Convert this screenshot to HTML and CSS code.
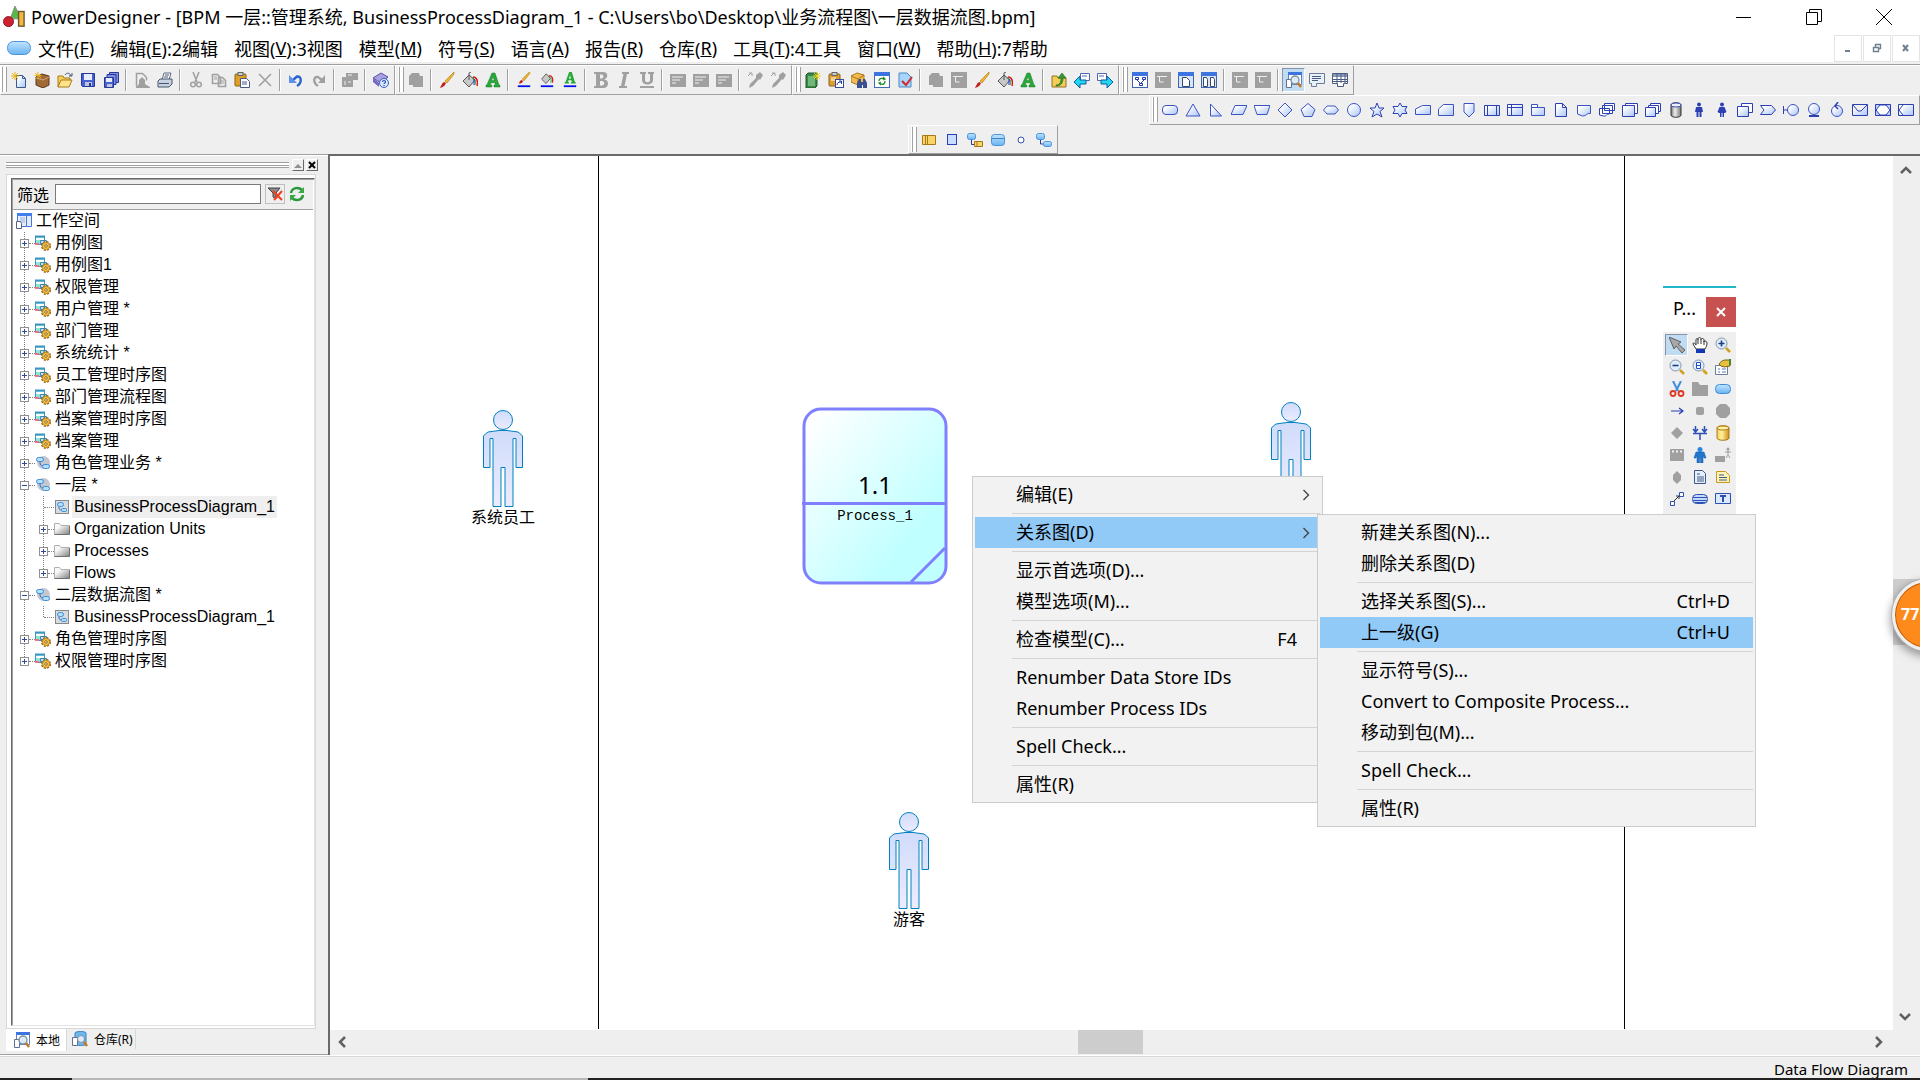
FILE: index.html
```
<!DOCTYPE html>
<html lang="zh-CN">
  <head>
    <meta charset="UTF-8" />
    <meta name="viewport" content="width=device-width, initial-scale=1.0" />
    <title>PowerDesigner</title>
    <link rel="stylesheet" href="styles.css" />
  </head>

  <body>
    <!-- icon sprite -->
    <svg class="sprite" width="0" height="0">
      <defs>
        <linearGradient id="gb" x1="0" y1="0" x2="1" y2="1"><stop offset="0.2" stop-color="#fff" /><stop offset="1" stop-color="#a9c4fa" /></linearGradient>
        <linearGradient id="gp" x1="0" y1="0" x2="0" y2="1"><stop offset="0" stop-color="#c4e4ff" /><stop offset="1" stop-color="#68b4f0" /></linearGradient>
        <linearGradient id="gy" x1="0" y1="0" x2="1" y2="0"><stop offset="0" stop-color="#f8d050" /><stop offset="0.4" stop-color="#fff0a0" /><stop offset="1" stop-color="#d09010" /></linearGradient>
        <linearGradient id="gg" x1="0" y1="0" x2="1" y2="1"><stop offset="0.3" stop-color="#f8f8f8" /><stop offset="1" stop-color="#808080" /></linearGradient>
        <linearGradient id="gc" x1="0" y1="0" x2="1" y2="0"><stop offset="0" stop-color="#777" /><stop offset="0.4" stop-color="#eee" /><stop offset="1" stop-color="#777" /></linearGradient>
        <linearGradient id="ga" x1="0" y1="0" x2="0" y2="1"><stop offset="0" stop-color="#d0dcfa" /><stop offset="1" stop-color="#ececff" /></linearGradient>
        <linearGradient id="gproc" x1="0" y1="0" x2="1" y2="1"><stop offset="0.05" stop-color="#fff" /><stop offset="0.75" stop-color="#c0ffff" /></linearGradient>

        <symbol id="app" viewBox="0 0 24 24"><path d="M13 0l7 14H8z" fill="#58b848" stroke="#888" /><rect x="17" y="6" width="6" height="16" fill="#f4b840" stroke="#6b5630" stroke-width="1.5" /><circle cx="6" cy="17" r="5.5" fill="#d02030" stroke="#801828" /></symbol>
        <symbol id="pill" viewBox="0 0 24 14"><rect x="0.5" y="0.5" width="23" height="13" rx="6" fill="url(#gp)" stroke="#4a94dc" /></symbol>
        <symbol id="new" viewBox="0 0 16 16"><path d="M5.5 3.5h6l3 3v9h-9z" fill="url(#gb)" stroke="#3a5a88" /><path d="M11.5 3.5v3h3" fill="none" stroke="#3a5a88" /><path d="M4 0v8M0 4h8M1 1l6 6M7 1L1 7" stroke="#e8b818" /></symbol>
        <symbol id="proj" viewBox="0 0 16 16"><path d="M2 5l6-3 7 2v9l-6 3-7-3z" fill="#a06a38" stroke="#603818" /><path d="M2 6l7 2 6-3" fill="none" stroke="#d8a870" /><path d="M4 0v7M0.5 3.5h7M1 1l6 5" stroke="#e8b818" /></symbol>
        <symbol id="open" viewBox="0 0 16 16"><path d="M1 15V4h5l1 2h6v3" fill="#f4d060" stroke="#a87818" /><path d="M1 15l3-7h11l-3 7z" fill="#ffe48a" stroke="#a87818" /><path d="M8 3c2-3 5-2 6 1M12 4h3V1" fill="none" stroke="#405878" /></symbol>
        <symbol id="save" viewBox="0 0 16 16"><path d="M1.5 1.5h13v13h-12l-1-1z" fill="#4860d0" stroke="#28389a" /><path d="M4 2h8v6H4z" fill="#e8ecff" /><path d="M5 10h7v4H5z" fill="#c0c8d8" /><path d="M9 11h2v3H9z" fill="#28389a" /></symbol>
        <symbol id="saveall" viewBox="0 0 16 16"><path d="M6.5 0.5h9v10h-9z" fill="#8090e0" stroke="#28389a" /><path d="M4 2.5h9v10H4z" fill="#8090e0" stroke="#28389a" /><path d="M1.5 5.5h9v10h-9z" fill="#4860d0" stroke="#28389a" /><path d="M3 6h6v4H3z" fill="#e8ecff" /><path d="M4 12h5v3H4z" fill="#c0c8d8" /></symbol>
        <symbol id="preview" viewBox="0 0 16 16"><path d="M2.5 14.5v-13h6l4 4v3" fill="none" stroke="#a0a0a0" stroke-width="1.5" /><path d="M2 15l3-3V8l3-3 3 3v4l5 3v1H2z" fill="#a0a0a0" /></symbol>
        <symbol id="print" viewBox="0 0 16 16"><path d="M5 8l2-7h7l-2 7z" fill="#fff" stroke="#5a6880" /><path d="M1 9l2-2h12v5l-3 3H1z" fill="#c8d2e0" stroke="#46546c" /><path d="M2 11.5h10M8 3h4M7 5h4" stroke="#46546c" /></symbol>
        <symbol id="cut" viewBox="0 0 16 16"><path d="M5 0l4 10M11 0L7 10" fill="none" stroke="#a0a0a0" stroke-width="1.5" /><circle cx="5" cy="12.5" r="2.3" fill="none" stroke="#a0a0a0" stroke-width="1.5" /><circle cx="11" cy="12.5" r="2.3" fill="none" stroke="#a0a0a0" stroke-width="1.5" /></symbol>
        <symbol id="copy" viewBox="0 0 16 16"><path d="M1.5 2.5h5l3 3v6h-8zM7.5 5.5h4l3 3v6h-7z" fill="#eee" stroke="#a0a0a0" stroke-width="1.6" /><path d="M9 9h4M9 11h4M3 5h3M3 7h3" stroke="#a0a0a0" /></symbol>
        <symbol id="paste" viewBox="0 0 16 16"><rect x="1" y="2" width="11" height="12" rx="1" fill="#e0a028" stroke="#88601c" /><rect x="4" y="0.5" width="5" height="3" fill="#c8ccd4" stroke="#666" /><path d="M6.5 6.5h6l3 3v6h-9z" fill="#fff" stroke="#4a5a88" /><path d="M8 10h5M8 12h5" stroke="#4a5a88" /></symbol>
        <symbol id="del" viewBox="0 0 16 16"><path d="M2 2l12 12M14 2L2 14" stroke="#a0a0a0" stroke-width="1.6" /></symbol>
        <symbol id="undo" viewBox="0 0 16 16"><path d="M9 14c5-3 5-10 0-9.500L5 8" fill="none" stroke="#2c62d0" stroke-width="2.4" /><path d="M1 3v8h8z" fill="#5c90ec" /></symbol>
        <symbol id="redo" viewBox="0 0 16 16"><path d="M7 14C2 11 2 4 7 5l4 3" fill="none" stroke="#a0a0a0" stroke-width="2.4" /><path d="M14 3v8H7z" fill="#a0a0a0" /></symbol>
        <symbol id="prop" viewBox="0 0 16 16"><path d="M0 5h11v10H0zM4 1h12v7H4z" fill="#a0a0a0" /><path d="M2 10h2M6 10h3M2 12h2M6 3h4" stroke="#eee" /></symbol>
        <symbol id="help" viewBox="0 0 16 16"><path d="M0 6l8-5 7 4-7 6z" fill="#a8a0e0" stroke="#5a50a8" /><path d="M0 6v4l6 5V11z" fill="#7468c0" /><circle cx="11" cy="11" r="4.500" fill="#dce8fc" stroke="#3860c0" /><path d="M9.500 10c0-2 3-2 3 0 0 1-1.500 1-1.500 2M11 13v1" fill="none" stroke="#2850b8" stroke-width="1.2" /></symbol>
        <symbol id="shapes" viewBox="0 0 16 16"><path d="M1 4l3-3h7l1 3h3v11H5v-2H1z" fill="#a0a0a0" /></symbol>
        <symbol id="brush" viewBox="0 0 16 16"><path d="M15 0L6 9l2 2 7-9z" fill="#f0b828" stroke="#a87010" stroke-width="0.6" /><path d="M5 10l2 1c-1 3-3 4-6 5 1-2 2-5 4-6z" fill="#c02020" /></symbol>
        <symbol id="bucket" viewBox="0 0 16 16"><path d="M7 3l6 5-6 7-6-6z" fill="#c8c8c8" stroke="#555" /><path d="M7 8V1l2-1" fill="none" stroke="#555" /><path d="M11 5c4 0 5 4 4 9" fill="none" stroke="#e01818" stroke-width="1.5" /><path d="M10 6c3 0 4 3 3 7" fill="none" stroke="#18a028" /><path d="M12 7v6" stroke="#2030e8" /></symbol>
        <symbol id="font" viewBox="0 0 16 16"><path d="M1 15v-2l1-.3L7 1h3l4 12 1 .3v1.700H9v-2l1.500-.3-.6-2H6l-.7 2 1.500.3v2zM6.600 8.500h2.700L8 4.500z" fill="#28a838" stroke="#187828" stroke-width="0.5" /></symbol>
        <symbol id="brushl" viewBox="0 0 16 18"><path d="M14 0L6 8l2 2 7-9z" fill="#f0b828" stroke="#a87010" stroke-width="0.6" /><path d="M5 9l2 1c-1 2-2 3-5 3 1-1 1-3 3-4z" fill="#c02020" /><path d="M1 16h14" stroke="#0010e8" stroke-width="2" /></symbol>
        <symbol id="bucketl" viewBox="0 0 16 18"><path d="M7 2l5 5-5 6-5-5z" fill="#c8c8c8" stroke="#555" /><path d="M10 4c4 0 5 3 4 8" fill="none" stroke="#e01818" stroke-width="1.5" /><path d="M10 6c3 0 3 3 2 6" fill="none" stroke="#18a028" /><path d="M1 16h14" stroke="#0010e8" stroke-width="2" /></symbol>
        <symbol id="fontl" viewBox="0 0 16 18"><path d="M2 13v-1.500l1-.3L7 0h3l3.500 11.200 1 .3V13H9v-1.500l1-.3-.4-2H6.300l-.7 2 1.400.3V13zM6.800 7.500h2.300L8 3.500z" fill="#28a838" /><path d="M1 16h14" stroke="#0010e8" stroke-width="2" /></symbol>
        <symbol id="bold" viewBox="0 0 16 16"><path fill-rule="evenodd" d="M1 0h9c6 0 5 6.500 1 7.500 6 .5 5 8.500-1 8.500H1v-2h2V2H1zM7 2.500v4h1.500c2.500 0 2.500-4 0-4zM7 9v4.500h2c3 0 3-4.500 0-4.500z" fill="#a0a0a0" /></symbol>
        <symbol id="italic" viewBox="0 0 16 16"><path d="M6 0h7v2h-2L8.500 14H11v2H3v-2h2L7.500 2H6z" fill="#a0a0a0" /></symbol>
        <symbol id="under" viewBox="0 0 16 16"><path d="M1 0h6v2H6v6c0 3 5 3 5 0V2H9V0h6v2h-1v6c0 6-11 6-11 0V2H1zM1 14h14v2H1z" fill="#a0a0a0" /></symbol>
        <symbol id="al" viewBox="0 0 16 16"><path d="M0 2h16v13H0z" fill="#a0a0a0" /><path d="M2 5h11M2 8h8M2 11h4" stroke="#efefef" /></symbol>
        <symbol id="pipe" viewBox="0 0 16 16"><path d="M9 3l4-3 3 3-3 5-1-1-6 7-4 2 1-4 6-6z" fill="#a0a0a0" /><path d="M1 4l3-3M2 1h3v3" fill="none" stroke="#a0a0a0" /></symbol>
        <symbol id="book" viewBox="0 0 16 16"><path d="M1 3l2-2h9v13l-2 2H1z" fill="#388848" stroke="#205828" /><path d="M3 4h7v10H3z" fill="#70b878" /><path d="M12 0v8M8 4h8M9 1l6 6M15 1L9 7" stroke="#f0d020" /></symbol>
        <symbol id="pastel" viewBox="0 0 16 16"><rect x="1" y="2" width="11" height="12" rx="1" fill="#e0a028" stroke="#88601c" /><rect x="4" y="0.5" width="5" height="3" fill="#c8ccd4" stroke="#666" /><path d="M3 6h5M3 8h4" stroke="#fff" /><rect x="7.5" y="7.5" width="8" height="8" fill="#fff" stroke="#3a4a98" /><path d="M9 13c0-2 1-3 4-3M11 9h2.500v3" fill="none" stroke="#2038a0" /></symbol>
        <symbol id="cube" viewBox="0 0 16 16"><path d="M0 4l6-3 7 2v9l-6 1-7-3z" fill="#f4bc50" stroke="#a87818" /><path d="M0 4l7 3 6-4M7 7v6" fill="none" stroke="#a87818" /><path d="M6 11l2-4h2v3h2V7h2l2 4v5h-4v-3h-1v3H6z" fill="#3a5090" /></symbol>
        <symbol id="sync" viewBox="0 0 16 16"><rect x="0.5" y="0.5" width="15" height="15" fill="#fff" stroke="#4068b8" /><path d="M0 0h16v4H0z" fill="#3c74e0" /><path d="M5 9c0-3 3-3 5-2M9 5l2 2-2 1M11 9c0 4-4 4-5 2M7 13l-2-2 2-1" fill="none" stroke="#289030" stroke-width="1.3" /></symbol>
        <symbol id="check" viewBox="0 0 16 16"><path d="M2 1h8l4 4v10H2z" fill="#a8d4fa" stroke="#4888c8" /><path d="M5 9l4 4 6-8" fill="none" stroke="#d02828" stroke-width="2" /></symbol>
        <symbol id="gbox" viewBox="0 0 16 16"><path d="M0 0h16v16H0z" fill="#a0a0a0" /><path d="M2 4.500h10M4.500 4v6h4" fill="none" stroke="#eee" /></symbol>
        <symbol id="up" viewBox="0 0 16 16"><path d="M1 4h5l1 2h8v9H1z" fill="#f4cc58" stroke="#98701c" /><path d="M5 13c4 0 5-3 5-7H7l4-5 4 5h-3c0 5-2 8-7 8z" fill="#389838" stroke="#186818" stroke-width="0.6" /></symbol>
        <symbol id="prev" viewBox="0 0 16 16"><path d="M6.500 1.500h9v7h-9z" fill="#fff" stroke="#5068b0" /><path d="M8 4h5" stroke="#5068b0" /><path d="M0 10l6-6v4h6v4H6v4z" fill="#20d8f0" stroke="#1058a0" /></symbol>
        <symbol id="next" viewBox="0 0 16 16"><path d="M0.5 1.500h9v7h-9z" fill="#fff" stroke="#5068b0" /><path d="M2 4h5" stroke="#5068b0" /><path d="M16 10l-6-6v4H4v4h6v4z" fill="#20d8f0" stroke="#1058a0" /></symbol>
        <symbol id="wtree" viewBox="0 0 16 16"><rect x="0.5" y="0.5" width="15" height="15" fill="#fff" stroke="#3c64b0" /><path d="M0 0h16v4H0z" fill="#3c74e0" /><path d="M3.500 5.500h3v2h-3zM10.500 5.500h3v2h-3zM7.500 11.500h3v2h-3zM5 8l3 3M12 8l-3 3" fill="none" stroke="#2038a0" /></symbol>
        <symbol id="wdoc" viewBox="0 0 16 16"><rect x="0.5" y="0.5" width="15" height="15" fill="#d8e4f4" stroke="#3c64b0" /><path d="M0 0h16v4H0z" fill="#3c74e0" /><path d="M4.500 5.500h4l3 3v6h-7z" fill="#fff" stroke="#384868" /></symbol>
        <symbol id="wdocs" viewBox="0 0 16 16"><rect x="0.5" y="0.5" width="15" height="15" fill="#d8e4f4" stroke="#3c64b0" /><path d="M0 0h16v4H0z" fill="#3c74e0" /><path d="M2.500 5.500h3l1 2v7h-4zM9.500 5.500h3l1 2v7h-4z" fill="#fff" stroke="#384868" /></symbol>
        <symbol id="brow" viewBox="0 0 16 16"><path d="M2.500 0.500h13v12h-13z" fill="#fff" stroke="#6080c0" /><path d="M2 0h14v3H2z" fill="#3c74e0" /><path d="M0.500 7.500h5v8h-5z" fill="#fff" stroke="#607090" /><circle cx="9" cy="8" r="4" fill="#dceafa" stroke="#8090a0" stroke-width="1.4" /><path d="M12 11l3 4" stroke="#c87820" stroke-width="2.5" /></symbol>
        <symbol id="outp" viewBox="0 0 16 16"><path d="M0.500 1.500h15v10h-8v3h-5v-3h-2z" fill="#e8f0fc" stroke="#6a7c98" /><path d="M3 4.500h9M3 6.500h9M3 8.500h6" stroke="#4a5c80" /></symbol>
        <symbol id="resl" viewBox="0 0 16 16"><path d="M0.500 1.500h15v10h-4v3h-6v-3h-5z" fill="#fff" stroke="#4a5c80" /><path d="M1 2h14v3H1z" fill="#8898b8" /><path d="M1 7.500h14M1 9.500h14M5 2v9M9 2v9M13 2v9" stroke="#4a5c80" /></symbol>

        <!-- predefined shapes -->
        <symbol id="s1" viewBox="0 0 16 16"><rect x="0.5" y="3.5" width="15" height="9" rx="3.5" fill="url(#gb)" stroke="#3c54c0" /></symbol>
        <symbol id="s2" viewBox="0 0 16 16"><path d="M8 2l7 12H1z" fill="url(#gb)" stroke="#3c54c0" /></symbol>
        <symbol id="s3" viewBox="0 0 16 16"><path d="M2.500 2v12h11z" fill="url(#gb)" stroke="#3c54c0" /></symbol>
        <symbol id="s4" viewBox="0 0 16 16"><path d="M4 3.500h12l-4 9H0z" fill="url(#gb)" stroke="#3c54c0" /></symbol>
        <symbol id="s5" viewBox="0 0 16 16"><path d="M0 3.500h16l-3 9H3z" fill="url(#gb)" stroke="#3c54c0" /></symbol>
        <symbol id="s6" viewBox="0 0 16 16"><path d="M8 1l7 7-7 7-7-7z" fill="url(#gb)" stroke="#3c54c0" /></symbol>
        <symbol id="s7" viewBox="0 0 16 16"><path d="M8 1.500l7 6-3 7H4l-3-7z" fill="url(#gb)" stroke="#3c54c0" /></symbol>
        <symbol id="s8" viewBox="0 0 16 16"><path d="M4 4h8l3.500 4-3.500 4H4L.5 8z" fill="url(#gb)" stroke="#3c54c0" /></symbol>
        <symbol id="s9" viewBox="0 0 16 16"><circle cx="8" cy="8" r="6.5" fill="url(#gb)" stroke="#3c54c0" /></symbol>
        <symbol id="s10" viewBox="0 0 16 16"><path d="M8 1l2 5h5l-4 3.500 2 5.500-5-3-5 3 2-5.500L1 6h5z" fill="url(#gb)" stroke="#2c40b4" /></symbol>
        <symbol id="s11" viewBox="0 0 16 16"><path d="M8 1l2 3.500h5L13 8l2 3.500h-5L8 15l-2-3.500H1L3 8 1 4.500h5z" fill="url(#gb)" stroke="#2c40b4" /></symbol>
        <symbol id="s12" viewBox="0 0 16 16"><path d="M.5 7l7-3.500h8v9H.5z" fill="url(#gb)" stroke="#3c54c0" /></symbol>
        <symbol id="s13" viewBox="0 0 16 16"><path d="M.5 7l5-4.500h10v11H.5z" fill="url(#gb)" stroke="#3c54c0" /></symbol>
        <symbol id="s14" viewBox="0 0 16 16"><path d="M3 1.500h10V10l-5 5-5-5z" fill="url(#gb)" stroke="#3c54c0" /></symbol>
        <symbol id="s15" viewBox="0 0 16 16"><path d="M.5 3.500h15v10H.5zM3.500 3v10M12.500 3v10" fill="url(#gb)" stroke="#2c40b4" /></symbol>
        <symbol id="s16" viewBox="0 0 16 16"><path d="M.5 2.500h15v11H.5zM4.500 3v10M0 5.500h15" fill="url(#gb)" stroke="#2c40b4" /></symbol>
        <symbol id="s17" viewBox="0 0 16 16"><path d="M1.500 13.500v-11h6v3h7v8zM2 5.500h6" fill="url(#gb)" stroke="#3c54c0" /></symbol>
        <symbol id="s18" viewBox="0 0 16 16"><path d="M2.500 1.500h7l4 4v9h-11zM9.500 1.500v4h4" fill="url(#gb)" stroke="#2c40b4" /></symbol>
        <symbol id="s19" viewBox="0 0 16 16"><path d="M1.500 3.500h13v8c-4-1-4 3-8 2.500l-5-2z" fill="url(#gb)" stroke="#3c54c0" /></symbol>
        <symbol id="s20" viewBox="0 0 16 16"><path d="M5.500 1.500h10v7h-10zM3.500 3.500h10v8h-10zM.5 6.500h10V12c-3-1-3 3-6 2l-4-1z" fill="#fff" stroke="#2c40b4" /></symbol>
        <symbol id="s21" viewBox="0 0 16 16"><path d="M3.500 1.500h12v10h-12z" fill="#fff" stroke="#2c40b4" /><path d="M.5 3.500h12v11H.5z" fill="url(#gb)" stroke="#2c40b4" /></symbol>
        <symbol id="s22" viewBox="0 0 16 16"><path d="M5.500 1.500h10v8h-10z" fill="#fff" stroke="#2c40b4" /><path d="M3.500 3.500h10v8h-10z" fill="#fff" stroke="#2c40b4" /><path d="M.5 5.500h10v9H.5z" fill="url(#gb)" stroke="#2c40b4" /></symbol>
        <symbol id="s23" viewBox="0 0 16 16"><path d="M3 3c0-3 10-3 10 0v10c0 3-10 3-10 0z" fill="url(#gc)" stroke="#333" /><ellipse cx="8" cy="3" rx="5" ry="2" fill="#eef" stroke="#3850b8" /></symbol>
        <symbol id="s24" viewBox="0 0 16 16"><circle cx="8" cy="2.500" r="2" fill="#2c40b4" /><path d="M5 5h6l1 5h-1.500V7v8h-2v-5h-1v5h-2V7v3H4z" fill="#2c40b4" /></symbol>
        <symbol id="s25" viewBox="0 0 16 16"><circle cx="8" cy="2.500" r="2" fill="#2c40b4" /><path d="M5.500 5h5l2 5h-1.500L10 7.500 12 11h-2v4H8.500v-4h-1v4H6v-4H4l2-3.500L5 10H3.500z" fill="#2c40b4" /></symbol>
        <symbol id="s26" viewBox="0 0 16 16"><path d="M4.500 1.500h11v9h-11z" fill="#fff" stroke="#2c40b4" /><path d="M.5 4.500h11v10H.5z" fill="url(#gb)" stroke="#2c40b4" /></symbol>
        <symbol id="s27" viewBox="0 0 16 16"><path d="M.5 3.500h11l4 4.500-4 4.500H.5L4 8z" fill="url(#gb)" stroke="#2c40b4" /></symbol>
        <symbol id="s28" viewBox="0 0 16 16"><circle cx="10" cy="8" r="5.500" fill="url(#gb)" stroke="#3c54c0" /><path d="M.5 4v8M1 8h4" stroke="#2c40b4" /></symbol>
        <symbol id="s29" viewBox="0 0 16 16"><circle cx="8" cy="7" r="5.500" fill="url(#gb)" stroke="#3c54c0" /><path d="M3 14h10" stroke="#2c40b4" stroke-width="2" /></symbol>
        <symbol id="s30" viewBox="0 0 16 16"><circle cx="8" cy="9" r="5.500" fill="url(#gb)" stroke="#3c54c0" /><path d="M9 0L6 4l3 3" fill="none" stroke="#2c40b4" stroke-width="1.5" /></symbol>
        <symbol id="s31" viewBox="0 0 16 16"><path d="M.5 2.500h15v11H.5zM1 3l5 6h3l6-6" fill="url(#gb)" stroke="#2c40b4" /></symbol>
        <symbol id="s32" viewBox="0 0 16 16"><path d="M.5 2.500h15v11H.5z" fill="#c0d2fa" stroke="#2c40b4" /><path d="M5 3h6l4 5-4 5H5L1 8z" fill="#fff" stroke="#2c40b4" /></symbol>
        <symbol id="s33" viewBox="0 0 16 16"><path d="M.5 2.500h15v11H.5z" fill="url(#gb)" stroke="#2c40b4" /><path d="M5 3L1 8l4 5" fill="#fff" stroke="#2c40b4" /></symbol>

        <!-- bpm palette -->
        <symbol id="p1" viewBox="0 0 16 16"><path d="M1.500 3.500h13v9h-13z" fill="#f8d468" stroke="#a87818" /><path d="M4.500 4v8M6.500 4v8" stroke="#a87818" /></symbol>
        <symbol id="p2" viewBox="0 0 16 16"><rect x="3.500" y="2.500" width="9" height="10" fill="#c8dcff" stroke="#2c40b4" /></symbol>
        <symbol id="p3" viewBox="0 0 16 16"><rect x="0.500" y="1.500" width="8" height="6" rx="2" fill="url(#gp)" stroke="#4a94dc" /><path d="M4.500 8v4.500H8" fill="none" stroke="#2c3c90" /><path d="M7.500 9.500h8v5h-8zM10 10v4" fill="#f8d468" stroke="#a87818" /></symbol>
        <symbol id="p4" viewBox="0 0 16 16"><rect x="1.500" y="2.500" width="13" height="11" rx="3" fill="url(#gp)" stroke="#4a94dc" /><path d="M2 6.500h12" stroke="#3c84cc" /></symbol>
        <symbol id="p5" viewBox="0 0 16 16"><circle cx="8" cy="8" r="3" fill="#fff" stroke="#2c50b4" /></symbol>
        <symbol id="p6" viewBox="0 0 16 16"><rect x="0.500" y="1.500" width="8" height="6" rx="2" fill="url(#gp)" stroke="#4a94dc" /><path d="M4.500 8v4H8" fill="none" stroke="#2c3c90" /><rect x="7.500" y="9.500" width="8" height="5" rx="2" fill="url(#gp)" stroke="#4a94dc" /></symbol>

        <!-- tree -->
        <symbol id="plus" viewBox="0 0 9 9"><rect x="0.5" y="0.5" width="8" height="8" fill="#fff" stroke="#919191" /><path d="M2 4.500h5M4.500 2v5" stroke="#2c4c9c" /></symbol>
        <symbol id="minus" viewBox="0 0 9 9"><rect x="0.5" y="0.5" width="8" height="8" fill="#fff" stroke="#919191" /><path d="M2 4.500h5" stroke="#2c4c9c" /></symbol>
        <symbol id="work" viewBox="0 0 16 16"><path d="M1.500 0.500h14v13h-14z" fill="#e4ecfc" stroke="#4878d8" /><path d="M1 0h15v3H1z" fill="#4080ec" /><path d="M10.500 3v10" stroke="#4878d8" /><path d="M4 5h5M4 7h5M4 9h5" stroke="#a0b4e0" /><path d="M0.500 8.500h4l1 2v5h-5z" fill="#fff" stroke="#55627c" /></symbol>
        <symbol id="oom" viewBox="0 0 16 16"><path d="M.5 1.500h9v8h-9z" fill="#90e4d4" stroke="#3c94c4" /><path d="M0 .5h10v2H0z" fill="#3c94c4" /><path d="M1 3h8v2H1z" fill="#fff" /><path d="M0 8h4v2H0z" fill="#f07088" /><path d="M5.500 5.500h6v3h-6z" fill="#b8e8f8" stroke="#3c84b4" /><circle cx="11" cy="11" r="4" fill="none" stroke="#946418" stroke-width="2" stroke-dasharray="2 1.140" /><circle cx="11" cy="11" r="3.500" fill="#f8c848" stroke="#c89020" /><circle cx="11" cy="11" r="1.300" fill="#fff" stroke="#946418" /></symbol>
        <symbol id="bpm" viewBox="0 0 16 16"><circle cx="8.500" cy="7.500" r="6.500" fill="#c4c8ce" /><rect x="1.500" y="2.500" width="7" height="4" rx="2" fill="#b4e0ff" stroke="#3c8cd8" /><path d="M5 7c0 3 1 4 3 4" fill="none" stroke="#2c70c0" /><rect x="7.500" y="9.500" width="7" height="4" rx="2" fill="#b4e0ff" stroke="#3c8cd8" /></symbol>
        <symbol id="dia" viewBox="0 0 16 16"><rect x="1.500" y="1.500" width="13" height="13" fill="#d8dce0" stroke="#888" /><rect x="3.500" y="3.500" width="6" height="4" rx="2" fill="#b4e0ff" stroke="#3c8cd8" /><path d="M5 8c0 3 1 3 3 3" fill="none" stroke="#2c70c0" /><rect x="7.500" y="9.500" width="5" height="3" rx="1" fill="#b4e0ff" stroke="#3c8cd8" /></symbol>
        <symbol id="fold" viewBox="0 0 16 16"><path d="M.5 13.500v-11h5l1.500 2h8.500v9z" fill="url(#gg)" stroke="#b0b0b0" /><path d="M15.500 5v8.500H.5" fill="none" stroke="#707070" /></symbol>
        <symbol id="repo" viewBox="0 0 16 16"><path d="M3 2c0-2 11-2 11 0v11c0 2-11 2-11 0z" fill="#6cb8ec" stroke="#3880c0" /><path d="M0.500 6.500h5v8h-5z" fill="#fff" stroke="#607090" /><circle cx="9" cy="8" r="3.500" fill="#dceafa" stroke="#8090a0" /><path d="M12 11l3 4" stroke="#c87820" stroke-width="2.5" /></symbol>
        <symbol id="filt" viewBox="0 0 16 16"><path d="M1 2h12L9 7v6l-3-2V7z" fill="#888" stroke="#444" /><path d="M6 5l9 9M15 5l-8 9" stroke="#f04020" stroke-width="2" /></symbol>
        <symbol id="refr" viewBox="0 0 16 16"><path d="M2 7c1-6 8-6 11-3M14 9c-1 6-8 6-11 3" fill="none" stroke="#289838" stroke-width="2.5" /><path d="M15 1v6H9zM1 15V9h6z" fill="#38a848" /></symbol>

        <!-- floating palette -->
        <symbol id="t1" viewBox="0 0 16 16"><path d="M0 0l5 12 2-3 6 7 3-3-7-6 3-2z" fill="#a8a8a8" stroke="#606060" /></symbol>
        <symbol id="t2" viewBox="0 0 16 16"><path d="M4 12L1 7c0-2 2-1 3 1V3c0-2 2-2 2 0V2c0-2 3-2 3 0v1c0-2 3-2 3 0v2c0-2 3-1 3 1 0 3-1 4-2 6z" fill="#fff" stroke="#333" /><path d="M6 3v4M9 3v4M12 4v4" stroke="#333" /><path d="M4 12h9v4H4z" fill="#1038b0" /></symbol>
        <symbol id="t3" viewBox="0 0 16 16"><circle cx="6.500" cy="6.500" r="5.500" fill="#e0eefc" stroke="#8494a8" /><path d="M3.500 6.500h6M6.500 3.500v6" stroke="#203c80" stroke-width="1.6" /><path d="M11 11l4 4" stroke="#d0a020" stroke-width="2.5" /></symbol>
        <symbol id="t4" viewBox="0 0 16 16"><circle cx="6.500" cy="6.500" r="5.500" fill="#e0eefc" stroke="#8494a8" /><path d="M3.500 6.500h6" stroke="#203c80" stroke-width="1.6" /><path d="M11 11l4 4" stroke="#d0a020" stroke-width="2.5" /></symbol>
        <symbol id="t5" viewBox="0 0 16 16"><circle cx="6.500" cy="6.500" r="5.500" fill="#e0eefc" stroke="#8494a8" /><path d="M4.500 3.500h4v6h-4zM4.500 6.500h4" fill="#fff" stroke="#2050c8" /><path d="M11 11l4 4" stroke="#d0a020" stroke-width="2.5" /></symbol>
        <symbol id="t6" viewBox="0 0 16 16"><path d="M.5 6.500h12v9H.5z" fill="#fff" stroke="#707c90" /><path d="M3 10h2M7 10h4M3 13h2M7 13h4" stroke="#5878b8" /><path d="M4 5c3-4 5-4 8-4h3v6l-6 1-3-1z" fill="#e8c040" stroke="#806010" /><path d="M14 0h2v6h-2z" fill="#408838" /></symbol>
        <symbol id="t7" viewBox="0 0 16 16"><path d="M4 0l5 10M12 0L7 10" fill="none" stroke="#3c90dc" stroke-width="2" /><circle cx="4" cy="12.500" r="2.500" fill="none" stroke="#e03820" stroke-width="1.8" /><circle cx="12" cy="12.500" r="2.500" fill="none" stroke="#e03820" stroke-width="1.8" /></symbol>
        <symbol id="t8" viewBox="0 0 16 16"><path d="M0 1h6l2 3h8v11H0z" fill="#a0a0a0" /></symbol>
        <symbol id="t9" viewBox="0 0 16 16"><rect x="0.500" y="3.500" width="15" height="9" rx="4" fill="url(#gp)" stroke="#3c8cd8" /></symbol>
        <symbol id="t10" viewBox="0 0 16 16"><path d="M2 8h12M10 5l4 3-4 3" fill="none" stroke="#2c40b4" stroke-width="1.2" /></symbol>
        <symbol id="t11" viewBox="0 0 16 16"><rect x="4" y="4" width="8" height="8" rx="2" fill="#a0a0a0" /></symbol>
        <symbol id="t12" viewBox="0 0 16 16"><path d="M5 1h6l4 4v6l-4 4H5l-4-4V5z" fill="#a0a0a0" /></symbol>
        <symbol id="t13" viewBox="0 0 16 16"><path d="M8 2l6 6-6 6-6-6z" fill="#a0a0a0" /></symbol>
        <symbol id="t14" viewBox="0 0 16 16"><path d="M1 8.500h14M8 9v6M3.500 1v5M12.500 1v5M1 4l2.500 3L6 4M10 4l2.500 3L15 4" fill="none" stroke="#2c50b4" stroke-width="1.5" /></symbol>
        <symbol id="t15" viewBox="0 0 16 16"><path d="M2 3c0-3 12-3 12 0v10c0 3-12 3-12 0z" fill="url(#gy)" stroke="#a87818" /><ellipse cx="8" cy="3" rx="6" ry="2" fill="#fff0a0" stroke="#a87818" /></symbol>
        <symbol id="t16" viewBox="0 0 16 16"><path d="M1 2h14v12H1z" fill="#a0a0a0" /><path d="M3 4.500h2M7 4.500h2M11 4.500h2" stroke="#efefef" stroke-width="2" /></symbol>
        <symbol id="t17" viewBox="0 0 16 16"><circle cx="8" cy="2.500" r="2.500" fill="#2888e0" /><path d="M4 5h8l2 6h-2l-1-3v8H8.500v-5h-1v5H5V8l-1 3H2z" fill="#2078d0" stroke="#1450a0" stroke-width="0.5" /></symbol>
        <symbol id="t18" viewBox="0 0 16 16"><path d="M0 9h10v6H0z" fill="#a0a0a0" /><circle cx="13" cy="2" r="1.500" fill="#a0a0a0" /><path d="M10 5h6M13 3v5l-2 3M13 8l2 3" stroke="#a0a0a0" fill="none" /></symbol>
        <symbol id="t19" viewBox="0 0 16 16"><path d="M8 2l4 4v5l-4 4-4-4V6z" fill="#a0a0a0" /></symbol>
        <symbol id="t20" viewBox="0 0 16 16"><path d="M2.500 1.500h8l3 3v10h-11z" fill="#e4eefc" stroke="#405888" /><path d="M5 5h3M5 8h7M5 10h7M5 12h7" stroke="#405888" /></symbol>
        <symbol id="t21" viewBox="0 0 16 16"><path d="M1.500 2.500h9l4 4v7h-13z" fill="#fff4b8" stroke="#c89818" /><path d="M4 6h5M4 8.500h8M4 11h8" stroke="#405888" /></symbol>
        <symbol id="t22" viewBox="0 0 16 16"><path d="M1.500 10.500h4v4h-4zM10.500 1.500h4v4h-4z" fill="#fff" stroke="#2c50b4" /><path d="M5 10l5-5M7 5h3v3" stroke="#333" fill="none" /></symbol>
        <symbol id="t23" viewBox="0 0 16 16"><rect x="0.500" y="3.500" width="15" height="9" rx="4" fill="#c4d8fc" stroke="#2c50b4" /><path d="M1 6.500h14M1 9.500h14M3 11.500h10" stroke="#2c50b4" /></symbol>
        <symbol id="t24" viewBox="0 0 16 16"><path d="M.5 2.500h15v10H.5z" fill="#dce8fc" stroke="#2c50b4" /><path d="M5 5h6M8 5v6" stroke="#2c50b4" stroke-width="2" /></symbol>

        <symbol id="actor" viewBox="0 0 40 98"><circle cx="20" cy="10" r="9.500" fill="url(#ga)" stroke="#0080c0" /><path d="M16 20.500h8l11 1.500q3 2 4.500 4v31.500h-6.500V28.500h-3V96.500h-8v-39h-4v39h-8V28.500h-3V57.500h-6.500V26q1.500-2 4.500-4z" fill="url(#ga)" stroke="#0080c0" /></symbol>
        <symbol id="chev" viewBox="0 0 8 12"><path d="M1.500 1l5 5-5 5" fill="none" stroke="#404040" stroke-width="1.3" /></symbol>
        <symbol id="arr" viewBox="0 0 12 12"><path d="M3 1l5 5-5 5" fill="none" stroke="#606060" stroke-width="2.5" /></symbol>
      </defs>
    </svg>

    <header class="titlebar">
      <svg class="app-icon"><use href="#app" /></svg>
      <h1>PowerDesigner - [BPM 一层::管理系统, BusinessProcessDiagram_1 - C:\Users\bo\Desktop\业务流程图\一层数据流图.bpm]</h1>
      <div class="win-buttons">
        <button aria-label="最小化"><svg viewBox="0 0 16 16"><path d="M0 8.500h15" stroke="#000" /></svg></button>
        <button aria-label="还原"><svg viewBox="0 0 16 16"><path d="M.5 3.500h11v12H.5zM3.500 3V.5h12v12H12" fill="none" stroke="#000" /></svg></button>
        <button aria-label="关闭"><svg viewBox="0 0 16 16"><path d="M0 0l16 16M16 0L0 16" stroke="#000" /></svg></button>
      </div>
    </header>

    <nav class="menubar">
      <svg class="doc-icon"><use href="#pill" /></svg>
      <button>文件(<u>F</u>)</button>
      <button>编辑(<u>E</u>):2编辑</button>
      <button>视图(<u>V</u>):3视图</button>
      <button>模型(<u>M</u>)</button>
      <button>符号(<u>S</u>)</button>
      <button>语言(<u>A</u>)</button>
      <button>报告(<u>R</u>)</button>
      <button>仓库(<u>R</u>)</button>
      <button>工具(<u>T</u>):4工具</button>
      <button>窗口(<u>W</u>)</button>
      <button>帮助(<u>H</u>):7帮助</button>
      <div class="mdi-buttons">
        <button aria-label="最小化子窗口"><svg viewBox="0 0 10 10"><path d="M2 8h5" stroke="#708090" stroke-width="2" /></svg></button>
        <button aria-label="还原子窗口"><svg viewBox="0 0 10 10"><path d="M1.500 4.500h5v4h-5zM3.500 4V1.500h5v4H7" fill="none" stroke="#708090" stroke-width="1.4" /></svg></button>
        <button aria-label="关闭子窗口"><svg viewBox="0 0 10 10"><path d="M2 2l5 6M7 2L2 8" stroke="#708090" stroke-width="2" /></svg></button>
      </div>
    </nav>

    <section class="toolbars">
      <div class="tool-row">
        <div class="toolbar first">
          <button><svg><use href="#new" /></svg></button><button><svg><use href="#proj" /></svg></button><button><svg><use href="#open" /></svg></button><button><svg><use href="#save" /></svg></button><button><svg><use href="#saveall" /></svg></button>
          <i></i>
          <button><svg><use href="#preview" /></svg></button><button><svg><use href="#print" /></svg></button>
          <i></i>
          <button><svg><use href="#cut" /></svg></button><button><svg><use href="#copy" /></svg></button><button><svg><use href="#paste" /></svg></button><button><svg><use href="#del" /></svg></button>
          <i></i>
          <button><svg><use href="#undo" /></svg></button><button><svg><use href="#redo" /></svg></button>
          <i></i>
          <button><svg><use href="#prop" /></svg></button>
          <i></i>
          <button><svg><use href="#help" /></svg></button>
        </div>
        <div class="toolbar">
          <button><svg><use href="#shapes" /></svg></button>
          <i></i>
          <button><svg><use href="#brush" /></svg></button><button><svg><use href="#bucket" /></svg></button><button><svg><use href="#font" /></svg></button>
          <i></i>
          <button><svg><use href="#brushl" /></svg></button><button><svg><use href="#bucketl" /></svg></button><button><svg><use href="#fontl" /></svg></button>
          <i></i>
          <button><svg><use href="#bold" /></svg></button><button><svg><use href="#italic" /></svg></button><button><svg><use href="#under" /></svg></button>
          <i></i>
          <button><svg><use href="#al" /></svg></button><button><svg><use href="#al" /></svg></button><button><svg><use href="#al" /></svg></button>
          <i></i>
          <button><svg><use href="#pipe" /></svg></button><button><svg><use href="#pipe" /></svg></button>
        </div>
        <div class="toolbar">
          <button><svg><use href="#book" /></svg></button><button><svg><use href="#pastel" /></svg></button><button><svg><use href="#cube" /></svg></button><button><svg><use href="#sync" /></svg></button><button><svg><use href="#check" /></svg></button>
          <i></i>
          <button><svg><use href="#shapes" /></svg></button><button><svg><use href="#gbox" /></svg></button><button><svg><use href="#brush" /></svg></button><button><svg><use href="#bucket" /></svg></button><button><svg><use href="#font" /></svg></button>
          <i></i>
          <button><svg><use href="#up" /></svg></button><button><svg><use href="#prev" /></svg></button><button><svg><use href="#next" /></svg></button>
        </div>
        <div class="toolbar">
          <button><svg><use href="#wtree" /></svg></button><button><svg><use href="#gbox" /></svg></button><button><svg><use href="#wdoc" /></svg></button><button><svg><use href="#wdocs" /></svg></button>
          <i></i>
          <button><svg><use href="#gbox" /></svg></button><button><svg><use href="#gbox" /></svg></button>
          <i></i>
          <button class="pressed"><svg><use href="#brow" /></svg></button><button><svg><use href="#outp" /></svg></button><button><svg><use href="#resl" /></svg></button>
        </div>
      </div>

      <div class="tool-row shapes">
        <div class="toolbar">
          <button><svg><use href="#s1" /></svg></button><button><svg><use href="#s2" /></svg></button><button><svg><use href="#s3" /></svg></button><button><svg><use href="#s4" /></svg></button><button><svg><use href="#s5" /></svg></button><button><svg><use href="#s6" /></svg></button><button><svg><use href="#s7" /></svg></button><button><svg><use href="#s8" /></svg></button><button><svg><use href="#s9" /></svg></button><button><svg><use href="#s10" /></svg></button><button><svg><use href="#s11" /></svg></button>
          <button><svg><use href="#s12" /></svg></button><button><svg><use href="#s13" /></svg></button><button><svg><use href="#s14" /></svg></button><button><svg><use href="#s15" /></svg></button><button><svg><use href="#s16" /></svg></button><button><svg><use href="#s17" /></svg></button><button><svg><use href="#s18" /></svg></button><button><svg><use href="#s19" /></svg></button><button><svg><use href="#s20" /></svg></button><button><svg><use href="#s21" /></svg></button><button><svg><use href="#s22" /></svg></button>
          <button><svg><use href="#s23" /></svg></button><button><svg><use href="#s24" /></svg></button><button><svg><use href="#s25" /></svg></button><button><svg><use href="#s26" /></svg></button><button><svg><use href="#s27" /></svg></button><button><svg><use href="#s28" /></svg></button><button><svg><use href="#s29" /></svg></button><button><svg><use href="#s30" /></svg></button><button><svg><use href="#s31" /></svg></button><button><svg><use href="#s32" /></svg></button><button><svg><use href="#s33" /></svg></button>
        </div>
      </div>

      <div class="tool-row bpm">
        <div class="toolbar">
          <button><svg><use href="#p1" /></svg></button><button><svg><use href="#p2" /></svg></button><button><svg><use href="#p3" /></svg></button><button><svg><use href="#p4" /></svg></button><button><svg><use href="#p5" /></svg></button><button><svg><use href="#p6" /></svg></button>
        </div>
      </div>
    </section>

    <main class="workspace">
      <aside class="browser">
        <div class="dock-head">
          <span class="dock-grip"></span>
          <button aria-label="折叠"><svg viewBox="0 0 10 10"><path d="M1 8l4-4 4 4z" fill="#909090" /></svg></button>
          <button aria-label="关闭浏览器"><svg viewBox="0 0 10 10"><path d="M2 2l6 6M8 2L2 8" stroke="#000" stroke-width="2" /></svg></button>
        </div>
        <div class="frame">
          <div class="frame-in">
            <div class="filter">
              <label for="filter">筛选</label>
              <input type="text" id="filter" />
              <button class="boxed" aria-label="清除筛选"><svg><use href="#filt" /></svg></button>
              <button aria-label="刷新"><svg><use href="#refr" /></svg></button>
            </div>
            <div class="tree">
              <div class="row root"><svg class="ico"><use href="#work" /></svg><span>工作空间</span></div>
              <ul>
                <li><div class="row"><button><svg><use href="#plus" /></svg></button><svg class="ico"><use href="#oom" /></svg><span>用例图</span></div></li>
                <li><div class="row"><button><svg><use href="#plus" /></svg></button><svg class="ico"><use href="#oom" /></svg><span>用例图1</span></div></li>
                <li><div class="row"><button><svg><use href="#plus" /></svg></button><svg class="ico"><use href="#oom" /></svg><span>权限管理</span></div></li>
                <li><div class="row"><button><svg><use href="#plus" /></svg></button><svg class="ico"><use href="#oom" /></svg><span>用户管理 *</span></div></li>
                <li><div class="row"><button><svg><use href="#plus" /></svg></button><svg class="ico"><use href="#oom" /></svg><span>部门管理</span></div></li>
                <li><div class="row"><button><svg><use href="#plus" /></svg></button><svg class="ico"><use href="#oom" /></svg><span>系统统计 *</span></div></li>
                <li><div class="row"><button><svg><use href="#plus" /></svg></button><svg class="ico"><use href="#oom" /></svg><span>员工管理时序图</span></div></li>
                <li><div class="row"><button><svg><use href="#plus" /></svg></button><svg class="ico"><use href="#oom" /></svg><span>部门管理流程图</span></div></li>
                <li><div class="row"><button><svg><use href="#plus" /></svg></button><svg class="ico"><use href="#oom" /></svg><span>档案管理时序图</span></div></li>
                <li><div class="row"><button><svg><use href="#plus" /></svg></button><svg class="ico"><use href="#oom" /></svg><span>档案管理</span></div></li>
                <li><div class="row"><button><svg><use href="#plus" /></svg></button><svg class="ico"><use href="#bpm" /></svg><span>角色管理业务 *</span></div></li>
                <li>
                  <div class="row"><button><svg><use href="#minus" /></svg></button><svg class="ico"><use href="#bpm" /></svg><span>一层 *</span></div>
                  <ul>
                    <li><div class="row leaf"><svg class="ico"><use href="#dia" /></svg><span class="selected">BusinessProcessDiagram_1</span></div></li>
                    <li><div class="row"><button><svg><use href="#plus" /></svg></button><svg class="ico"><use href="#fold" /></svg><span>Organization Units</span></div></li>
                    <li><div class="row"><button><svg><use href="#plus" /></svg></button><svg class="ico"><use href="#fold" /></svg><span>Processes</span></div></li>
                    <li><div class="row"><button><svg><use href="#plus" /></svg></button><svg class="ico"><use href="#fold" /></svg><span>Flows</span></div></li>
                  </ul>
                </li>
                <li>
                  <div class="row"><button><svg><use href="#minus" /></svg></button><svg class="ico"><use href="#bpm" /></svg><span>二层数据流图 *</span></div>
                  <ul>
                    <li><div class="row leaf"><svg class="ico"><use href="#dia" /></svg><span>BusinessProcessDiagram_1</span></div></li>
                  </ul>
                </li>
                <li><div class="row"><button><svg><use href="#plus" /></svg></button><svg class="ico"><use href="#oom" /></svg><span>角色管理时序图</span></div></li>
                <li><div class="row"><button><svg><use href="#plus" /></svg></button><svg class="ico"><use href="#oom" /></svg><span>权限管理时序图</span></div></li>
              </ul>
            </div>
          </div>
        </div>
        <div class="tabs">
          <button class="active"><svg><use href="#brow" /></svg>本地</button>
          <button><svg><use href="#repo" /></svg>仓库(R)</button>
        </div>
      </aside>

      <section class="diagram">
        <div class="canvas">
          <div class="lane lane-a"></div>
          <div class="lane lane-b"></div>

          <div class="node actor staff"><svg><use href="#actor" /></svg><span>系统员工</span></div>
          <div class="node actor guest"><svg><use href="#actor" /></svg><span>游客</span></div>
          <div class="node actor admin"><svg><use href="#actor" /></svg></div>

          <div class="node process">
            <svg class="process-shape" viewBox="0 0 146 178">
              <rect x="2" y="2" width="142" height="174" rx="17" fill="url(#gproc)" stroke="#8080ff" stroke-width="3" />
              <path d="M0 96.500h144M143 141l-34 34" stroke="#8080ff" stroke-width="3" />
            </svg>
            <strong>1.1</strong>
            <span>Process_1</span>
          </div>

          <div class="palette">
            <div class="palette-head"><span>P...</span><button aria-label="关闭工具箱"><svg viewBox="0 0 10 10"><path d="M1 1l8 8M9 1L1 9" stroke="#fff" stroke-width="2" /></svg></button></div>
            <div class="palette-grid">
              <button class="pressed"><svg><use href="#t1" /></svg></button><button><svg><use href="#t2" /></svg></button><button><svg><use href="#t3" /></svg></button>
              <button><svg><use href="#t4" /></svg></button><button><svg><use href="#t5" /></svg></button><button><svg><use href="#t6" /></svg></button>
              <button><svg><use href="#t7" /></svg></button><button><svg><use href="#t8" /></svg></button><button><svg><use href="#t9" /></svg></button>
              <button><svg><use href="#t10" /></svg></button><button><svg><use href="#t11" /></svg></button><button><svg><use href="#t12" /></svg></button>
              <button><svg><use href="#t13" /></svg></button><button><svg><use href="#t14" /></svg></button><button><svg><use href="#t15" /></svg></button>
              <button><svg><use href="#t16" /></svg></button><button><svg><use href="#t17" /></svg></button><button><svg><use href="#t18" /></svg></button>
              <button><svg><use href="#t19" /></svg></button><button><svg><use href="#t20" /></svg></button><button><svg><use href="#t21" /></svg></button>
              <button><svg><use href="#t22" /></svg></button><button><svg><use href="#t23" /></svg></button><button><svg><use href="#t24" /></svg></button>
            </div>
          </div>

          <div class="menu context">
            <button>编辑(E)<svg><use href="#chev" /></svg></button>
            <hr />
            <button class="hot">关系图(D)<svg><use href="#chev" /></svg></button>
            <hr />
            <button>显示首选项(D)...</button>
            <button>模型选项(M)...</button>
            <hr />
            <button>检查模型(C)...<kbd>F4</kbd></button>
            <hr />
            <button>Renumber Data Store IDs</button>
            <button>Renumber Process IDs</button>
            <hr />
            <button>Spell Check...</button>
            <hr />
            <button>属性(R)</button>
          </div>

          <div class="menu submenu">
            <button>新建关系图(N)...</button>
            <button>删除关系图(D)</button>
            <hr />
            <button>选择关系图(S)...<kbd>Ctrl+D</kbd></button>
            <button class="hot">上一级(G)<kbd>Ctrl+U</kbd></button>
            <hr />
            <button>显示符号(S)...</button>
            <button>Convert to Composite Process...</button>
            <button>移动到包(M)...</button>
            <hr />
            <button>Spell Check...</button>
            <hr />
            <button>属性(R)</button>
          </div>
        </div>

        <div class="scroll vertical">
          <button class="turn-up" aria-label="向上"><svg><use href="#arr" /></svg></button>
          <div class="track"><div class="thumb"></div></div>
          <button class="turn-down" aria-label="向下"><svg><use href="#arr" /></svg></button>
        </div>
        <div class="scroll horizontal">
          <button class="turn-left" aria-label="向左"><svg><use href="#arr" /></svg></button>
          <div class="track"><div class="thumb"></div></div>
          <button aria-label="向右"><svg><use href="#arr" /></svg></button>
        </div>
        <div class="ball">77</div>
      </section>
    </main>

    <footer class="statusbar">Data Flow Diagram</footer>
    <div class="taskbar-edge"><span class="dark"></span><span class="light"></span><span class="rest"></span></div>
  </body>
</html>
```
FILE: styles.css
```
* {
  box-sizing: border-box;
}

html,
body {
  margin: 0;
  padding: 0;
  height: 100%;
  overflow: hidden;
}

body {
  display: flex;
  flex-direction: column;
  background: #efefef;
  color: #000;
  font-family: "Noto Sans", "Noto Sans CJK SC", sans-serif;
  font-size: 18px;
}

button {
  margin: 0;
  padding: 0;
  border: 0;
  background: none;
  color: inherit;
  font: inherit;
  display: flex;
  align-items: center;
  justify-content: center;
}

svg {
  display: block;
  width: 16px;
  height: 16px;
  flex: none;
}

.sprite {
  position: absolute;
  width: 0;
  height: 0;
}

/* title and menu */
.titlebar {
  display: flex;
  align-items: center;
  height: 34px;
  padding: 0 1px 0 2px;
  background: #fff;
}

.app-icon {
  width: 24px;
  height: 22px;
}

.titlebar h1 {
  flex: 1;
  margin: 0 0 0 5px;
  font-size: 18px;
  font-weight: 400;
  line-height: 34px;
  white-space: nowrap;
}

.win-buttons {
  display: flex;
}

.win-buttons button {
  width: 70px;
  height: 34px;
}

.menubar {
  display: flex;
  align-items: center;
  height: 28px;
  padding-left: 7px;
  background: #fff;
}

.doc-icon {
  width: 24px;
  height: 14px;
}

.menubar > button {
  height: 28px;
  padding: 0 8px 0 7px;
  white-space: nowrap;
}

.menubar > button + button {
  padding-left: 8px;
}

.mdi-buttons {
  display: flex;
  gap: 1px;
  margin-left: auto;
}

.mdi-buttons button {
  width: 28px;
  height: 27px;
  border: 1px solid #e4e4e4;
}

.mdi-buttons svg {
  width: 10px;
  height: 10px;
}

/* toolbars */
.toolbars {
  margin-top: 2px;
  border-top: 1px solid #a0a0a0;
}

.tool-row {
  display: flex;
  height: 30px;
}

.tool-row:first-child {
  box-shadow: inset 0 1px #fff;
}

.tool-row.shapes {
  justify-content: flex-end;
}

.tool-row.bpm {
  height: 29px;
  padding-left: 908px;
}

.toolbar {
  display: flex;
  align-items: center;
  padding: 0 2px 0 8px;
  border: 1px solid;
  border-color: #fff #a0a0a0 #a0a0a0 #fff;
  background: linear-gradient(#a0a0a0, #a0a0a0) 3px 1px / 1px 25px no-repeat,
    linear-gradient(#a0a0a0, #a0a0a0) 7px 1px / 1px 25px no-repeat,
    linear-gradient(#fff, #fff) 2px 1px / 5px 25px no-repeat;
}

.toolbar.first {
  padding-left: 6px;
  background-position: 1px 1px, 5px 1px, 0 1px;
}

.toolbar button {
  width: 23px;
  height: 24px;
}

.toolbar i {
  width: 2px;
  height: 22px;
  margin: 0 3px;
  border-left: 1px solid #a0a0a0;
  border-right: 1px solid #fff;
}

.toolbar .pressed,
.palette-grid .pressed {
  border: 1px solid #8494a8;
  border-right-color: #fff;
  border-bottom-color: #fff;
  background: #c0dcf3;
}

/* workspace */
.workspace {
  flex: 1;
  display: flex;
  min-height: 0;
}

.browser {
  display: flex;
  flex-direction: column;
  width: 328px;
  padding: 4px 9px 2px 6px;
  border-top: 1px solid #a0a0a0;
  border-bottom: 1px solid #a0a0a0;
  box-shadow: inset 0 1px #fff;
}

.dock-head {
  display: flex;
  align-items: center;
  gap: 2px;
  height: 15px;
  padding-bottom: 3px;
}

.dock-grip {
  width: 283px;
  height: 6px;
  margin-right: 1px;
  border: 1px solid #a0a0a0;
  border-width: 1px 0;
  background: linear-gradient(#fff 2px, #a0a0a0 2px, #a0a0a0 3px, #fff 3px);
}

.dock-head button {
  width: 12px;
  height: 12px;
  border: 1px solid;
  border-color: #fff #696969 #696969 #fff;
}

.dock-head button svg {
  width: 10px;
  height: 10px;
}

.frame {
  flex: 1;
  display: flex;
  width: 310px;
  min-height: 0;
  padding: 3px 2px 2px 4px;
  border: 1px solid #d8d8d8;
  background: #fff;
}

.frame-in {
  flex: 1;
  border: 1px solid;
  border-color: #696969 #e3e3e3 #e3e3e3 #696969;
  box-shadow: inset 1px 1px #a0a0a0;
  padding: 1px;
}

.filter {
  display: flex;
  align-items: center;
  height: 30px;
  padding: 0 4px 2px;
  border-bottom: 1px solid #a0a0a0;
  background: #efefef;
  font-size: 16px;
}

.filter label {
  width: 38px;
}

.filter input {
  width: 206px;
  height: 20px;
  margin-right: 4px;
  border: 1px solid #7a7a7a;
  background: #fff;
}

.filter button {
  width: 24px;
  height: 20px;
}

.filter .boxed {
  width: 20px;
  border: 1px solid #c0c0c0;
}

.tree {
  font-family: "Liberation Sans", "Noto Sans CJK SC", sans-serif;
  font-size: 16px;
}

.tree ul {
  margin: 0;
  padding: 0;
  list-style: none;
}

.tree ul ul {
  padding-left: 19px;
}

/* dotted trunk, cut short on the last child */
.tree li {
  background: repeating-linear-gradient(#808080 0 1px, transparent 1px 2px) 11px 0 / 1px 100% no-repeat;
}

.tree li:last-child {
  background-size: 1px 12px;
}

.row {
  display: flex;
  align-items: center;
  height: 22px;
  padding-left: 7px;
  line-height: 22px;
  white-space: nowrap;
}

.row button::after {
  content: "";
  width: 6px;
  border-top: 1px dotted #808080;
}

.row button svg {
  width: 9px;
  height: 9px;
}

.row.leaf::before {
  content: "";
  width: 10px;
  margin-left: 5px;
  border-top: 1px dotted #808080;
}

.row span {
  margin-left: 2px;
  padding: 0 2px;
}

.row.root {
  padding-left: 3px;
}

.row .selected {
  background: #efefef;
}

.tabs {
  display: flex;
  align-items: flex-start;
  height: 23px;
  font-size: 12px;
}

.tabs button {
  gap: 6px;
  height: 20px;
  padding: 0 2px 0 5px;
  border: 1px solid #d8d8d8;
  border-width: 0 1px 0 0;
}

.tabs .active {
  height: 22px;
  padding: 0 6px 0 8px;
  background: #fff;
}

/* diagram */
.diagram {
  position: relative;
  flex: 1;
  display: grid;
  grid-template: 1fr 24px / 1fr 25px;
  min-width: 0;
  padding: 0 2px 1px 0;
  border: 2px solid #696969;
  border-width: 2px 0 0 2px;
  overflow: hidden;
}

.canvas {
  position: relative;
  background: #fff;
}

.lane {
  position: absolute;
  top: 0;
  bottom: 1px;
  border-left: 1px solid #000;
}

.lane-a {
  left: 268px;
}

.lane-b {
  left: 1294px;
}

.node {
  position: absolute;
}

.actor {
  display: flex;
  flex-direction: column;
  align-items: center;
  width: 80px;
  font-size: 16px;
  line-height: 18px;
}

.actor svg {
  width: 40px;
  height: 98px;
}

.staff {
  left: 133px;
  top: 254px;
}

.guest {
  left: 539px;
  top: 656px;
}

.admin {
  left: 921px;
  top: 246px;
}

.process {
  left: 472px;
  top: 251px;
  display: grid;
  grid-template-rows: 96px 82px;
  width: 146px;
  text-align: center;
}

.process-shape {
  grid-area: 1 / 1 / 3 / 2;
  width: 146px;
  height: 178px;
}

.process strong {
  grid-area: 1 / 1;
  align-self: end;
  font-size: 24px;
  font-weight: 400;
  line-height: 36px;
}

.process span {
  grid-area: 2 / 1;
  font-family: "Liberation Mono", monospace;
  font-size: 14px;
  line-height: 26px;
}

/* floating palette */
.palette {
  position: absolute;
  left: 1333px;
  top: 130px;
  width: 73px;
  border-top: 2px solid #20b8c8;
  background: #fff;
}

.palette-head {
  display: flex;
  align-items: flex-start;
  justify-content: space-between;
  height: 44px;
  padding: 9px 0 0 10px;
  line-height: 22px;
}

.palette-head button {
  width: 30px;
  height: 30px;
  background: #c75050;
}

.palette-head svg {
  width: 10px;
  height: 10px;
}

.palette-grid {
  display: grid;
  grid-template-columns: repeat(3, 23px);
  grid-auto-rows: 22px;
  height: 200px;
  padding: 2px;
  background: #efefef;
}

/* popup menus */
.menu {
  position: absolute;
  padding: 2px;
  border: 1px solid #ccc;
  background: #f2f2f2;
}

.context {
  left: 642px;
  top: 320px;
  width: 351px;
}

.submenu {
  left: 987px;
  top: 358px;
  width: 439px;
}

.menu button {
  justify-content: flex-start;
  width: 100%;
  height: 31px;
  padding: 0 10px 0 41px;
  line-height: 31px;
}

.menu .hot {
  background: #91c9f7;
}

.menu svg {
  width: 8px;
  height: 12px;
  margin-left: auto;
}

.menu kbd {
  margin: 0 13px 0 auto;
  font: inherit;
}

.menu hr {
  height: 1px;
  margin: 3px 0 3px 37px;
  border: 0;
  background: #d4d4d4;
}

/* scrollbars */
.scroll {
  display: flex;
  background: #efefef;
}

.scroll button {
  width: 25px;
  height: 25px;
}

.scroll svg {
  width: 12px;
  height: 12px;
}

.vertical {
  flex-direction: column;
  padding: 2px 0 1px;
}

.horizontal {
  padding-right: 2px;
}

.horizontal button {
  height: 24px;
}

.scroll .track {
  flex: 1;
  display: flex;
}

.vertical .track {
  padding-top: 396px;
}

.vertical .thumb {
  width: 25px;
  height: 66px;
  background: #cdcdcd;
}

.horizontal .track {
  padding-left: 723px;
}

.horizontal .thumb {
  width: 65px;
  background: #cdcdcd;
}

.turn-up {
  transform: rotate(-90deg);
}

.turn-down {
  transform: rotate(90deg);
}

.turn-left {
  transform: rotate(180deg);
}

.ball {
  position: absolute;
  top: 423px;
  right: -44px;
  width: 72px;
  height: 72px;
  padding-left: 6px;
  border: 3px solid #f0f0f0;
  border-radius: 50%;
  background: #ff8a1c;
  box-shadow: inset 0 0 0 1px #b85c10, 0 0 0 1px #b0b0b0, 0 4px 8px 2px rgba(0, 0, 0, 0.35);
  color: #fff;
  font-size: 16px;
  font-weight: 700;
  line-height: 64px;
}

.statusbar {
  height: 23px;
  padding-right: 12px;
  border-top: 1px solid #fff;
  box-shadow: inset 0 1px #d8d8d8;
  font-size: 15px;
  line-height: 26px;
  text-align: right;
}

.taskbar-edge {
  display: flex;
  height: 2px;
}

.taskbar-edge .dark {
  width: 72px;
  background: #222;
}

.taskbar-edge .light {
  width: 516px;
  background: #b8b8b8;
}

.taskbar-edge .rest {
  flex: 1;
  background: #222;
}
```
